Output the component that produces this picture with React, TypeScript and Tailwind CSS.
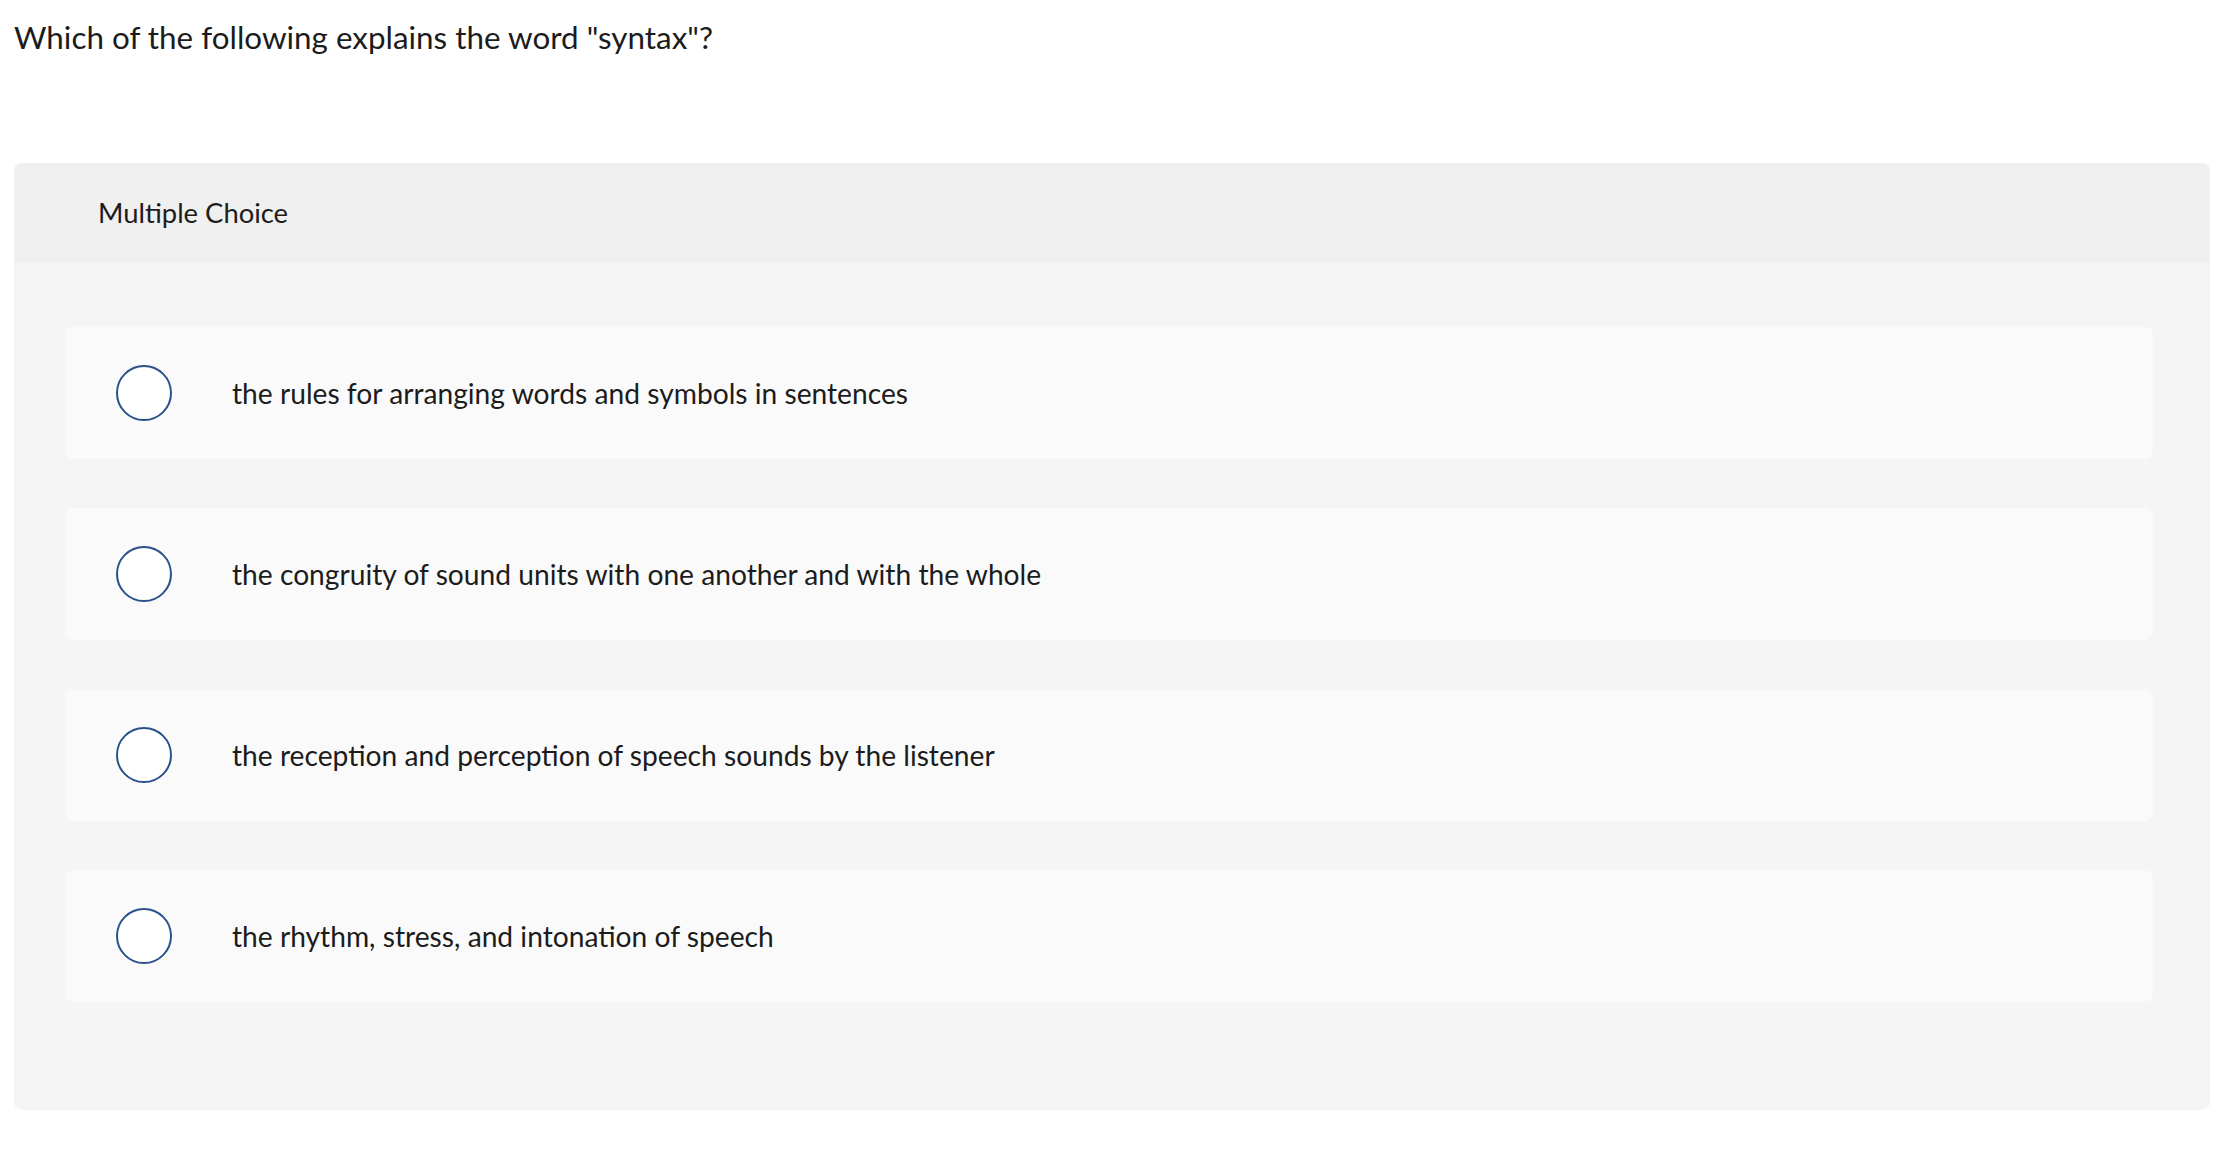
const options = [
  "the rules for arranging words and symbols in sentences",
  "the congruity of sound units with one another and with the whole",
  "the reception and perception of speech sounds by the listener",
  "the rhythm, stress, and intonation of speech",
];

function OptionRow({ label }: { label: string }) {
  return (
    <div className="flex h-[132px] items-center rounded-lg bg-[#fafafa]">
      <div className="ml-[51px] h-[56px] w-[56px] shrink-0 rounded-full border-2 border-[#2a5189] bg-white" />
      <div className="ml-[60px] text-[28.2px] text-[#1c1c1c]">{label}</div>
    </div>
  );
}

export default function App() {
  return (
    <div className="min-h-[1174px] bg-white px-[14px] font-['Lato',sans-serif]">
      <div className="flex h-[76px] items-center text-[31.4px] text-[#1c1c1c]">
        Which of the following explains the word "syntax"?
      </div>
      <div className="mt-[87px] w-[2196px] overflow-hidden rounded-lg bg-[#f5f5f5]">
        <div className="flex h-[100px] items-center bg-[#f0f0f0] pl-[84px] text-[27.4px] text-[#1c1c1c]">
          Multiple Choice
        </div>
        <div className="flex flex-col gap-[49px] pb-[108px] pl-[51px] pr-[57px] pt-[64px]">
          {options.map(o => (
            <OptionRow key={o} label={o} />
          ))}
        </div>
      </div>
    </div>
  );
}
